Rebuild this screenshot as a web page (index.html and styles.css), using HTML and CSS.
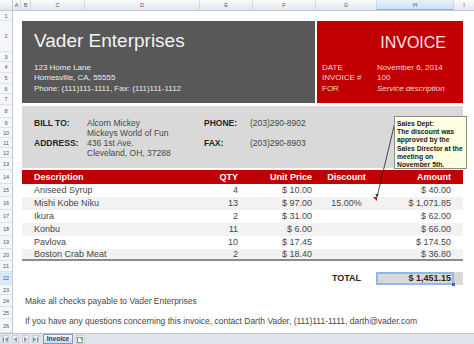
FILE: index.html
```html
<!DOCTYPE html>
<html lang="en">
<head>
    <meta charset="UTF-8">
    <meta name="viewport" content="width=device-width, initial-scale=1.0">
    <title>Invoice - Vader Enterprises</title>
    <link rel="stylesheet" href="styles.css">
</head>
<body>
<div class="app">
    <!-- column letters -->
    <div class="colhead">
        <div class="corner"></div>
        <div class="col col-a">A</div>
        <div class="col col-b">B</div>
        <div class="col col-c">C</div>
        <div class="col col-d">D</div>
        <div class="col col-e">E</div>
        <div class="col col-f">F</div>
        <div class="col col-g">G</div>
        <div class="col col-h active">H</div>
        <div class="col col-i">I</div>
    </div>

    <div class="workarea">
        <!-- row numbers -->
        <div class="rowhead">
            <div class="rn h10">1</div>
            <div class="rn h31">2</div>
            <div class="rn h10">3</div>
            <div class="rn h11">4</div>
            <div class="rn h11">5</div>
            <div class="rn h10">6</div>
            <div class="rn h11">7</div>
            <div class="rn h13">8</div>
            <div class="rn h10">9</div>
            <div class="rn h10">10</div>
            <div class="rn h10">11</div>
            <div class="rn h10">12</div>
            <div class="rn h12">13</div>
            <div class="rn h14">14</div>
            <div class="rn h13">15</div>
            <div class="rn h13">16</div>
            <div class="rn h13">17</div>
            <div class="rn h13">18</div>
            <div class="rn h13">19</div>
            <div class="rn h12">20</div>
            <div class="rn h11">21</div>
            <div class="rn h13 active">22</div>
            <div class="rn h10">23</div>
            <div class="rn h12">24</div>
            <div class="rn h12">25</div>
            <div class="rn h14">26</div>
        </div>

        <div class="sheet">
            <div class="banner">
                <div class="brand">
                    <h1>Vader Enterprises</h1>
                    <p>123 Home Lane</p>
                    <p>Homesville, CA, 55555</p>
                    <p>Phone: (111)111-1111, Fax: (111)111-1112</p>
                </div>
                <div class="invoice-head">
                    <h2>INVOICE</h2>
                    <div class="meta">
                        <span>DATE</span><span>November 6, 2014</span>
                        <span>INVOICE #</span><span>100</span>
                        <span>FOR</span><span class="italic">Service description</span>
                    </div>
                </div>
            </div>

            <div class="billing">
                <b>BILL TO:</b><span>Alcorn Mickey</span><b>PHONE:</b><span>(203)290-8902</span>
                <span></span><span>Mickeys World of Fun</span><span></span><span></span>
                <b>ADDRESS:</b><span>436 1st Ave.</span><b>FAX:</b><span>(203)290-8903</span>
                <span></span><span>Cleveland, OH, 37288</span><span></span><span></span>
            </div>

            <div class="items">
                <div class="row head">
                    <div class="c-desc">Description</div>
                    <div class="c-qty">QTY</div>
                    <div class="c-price">Unit Price</div>
                    <div class="c-disc">Discount</div>
                    <div class="c-amt">Amount</div>
                </div>
                <div class="row">
                    <div class="c-desc">Aniseed Syrup</div>
                    <div class="c-qty">4</div>
                    <div class="c-price">$ 10.00</div>
                    <div class="c-disc"></div>
                    <div class="c-amt">$ 40.00</div>
                </div>
                <div class="row alt">
                    <div class="c-desc">Mishi Kobe Niku</div>
                    <div class="c-qty">13</div>
                    <div class="c-price">$ 97.00</div>
                    <div class="c-disc">15.00%</div>
                    <div class="c-amt">$ 1,071.85</div>
                </div>
                <div class="row">
                    <div class="c-desc">Ikura</div>
                    <div class="c-qty">2</div>
                    <div class="c-price">$ 31.00</div>
                    <div class="c-disc"></div>
                    <div class="c-amt">$ 62.00</div>
                </div>
                <div class="row alt">
                    <div class="c-desc">Konbu</div>
                    <div class="c-qty">11</div>
                    <div class="c-price">$ 6.00</div>
                    <div class="c-disc"></div>
                    <div class="c-amt">$ 66.00</div>
                </div>
                <div class="row">
                    <div class="c-desc">Pavlova</div>
                    <div class="c-qty">10</div>
                    <div class="c-price">$ 17.45</div>
                    <div class="c-disc"></div>
                    <div class="c-amt">$ 174.50</div>
                </div>
                <div class="row alt last">
                    <div class="c-desc">Boston Crab Meat</div>
                    <div class="c-qty">2</div>
                    <div class="c-price">$ 18.40</div>
                    <div class="c-disc"></div>
                    <div class="c-amt">$ 36.80</div>
                </div>
            </div>

            <div class="row total">
                <div class="c-desc"></div>
                <div class="c-qty"></div>
                <div class="c-price"></div>
                <div class="c-disc">TOTAL</div>
                <div class="c-amt"><div class="selected">$ 1,451.15<span class="handle"></span></div></div>
            </div>

            <div class="notes">
                <p>Make all checks payable to Vader Enterprises</p>
                <p>If you have any questions concerning this invoice, contact Darth Vader, (111)111-1111, darth@vader.com</p>
            </div>
        </div>
    </div>

    <div class="tabbar">
        <span class="nav"><svg width="5" height="5" viewBox="0 0 5 5"><path d="M0 0h1v5H0zM5 0v5L1.5 2.5z" fill="#8a96a6"/></svg></span>
        <span class="nav"><svg width="5" height="5" viewBox="0 0 5 5"><path d="M4 0v5L0.5 2.5z" fill="#8a96a6"/></svg></span>
        <span class="nav"><svg width="5" height="5" viewBox="0 0 5 5"><path d="M1 0v5L4.5 2.5z" fill="#8a96a6"/></svg></span>
        <span class="nav"><svg width="5" height="5" viewBox="0 0 5 5"><path d="M0 0v5L3.5 2.5zM4 0h1v5H4z" fill="#8a96a6"/></svg></span>
        <span class="tab">Invoice</span>
        <span class="newsheet"><svg width="7" height="7" viewBox="0 0 7 7"><rect x="0.5" y="1.5" width="5" height="5" fill="#fff" stroke="#6b8e5a" stroke-width="0.8"/><path d="M3 0.5l1 1.5 1.6-0.4-0.6 1.5 1.3 1-1.7 0.2" fill="#5ea83c"/></svg></span>
    </div>

    <!-- comment note over the sheet -->
    <svg class="arrow" width="474" height="344" viewBox="0 0 474 344">
        <line x1="396" y1="118" x2="377.5" y2="195" stroke="#222" stroke-width="0.8"/>
        <path d="M377 197.5l-1.6-3.6 3.2 0.6z" fill="#222"/>
        <path d="M373 197h4v4z" fill="#e00000"/>
    </svg>
    <div class="comment">
        Sales Dept:<br>
        The discount was<br>
        approved by the<br>
        Sales Director at the<br>
        meeting on<br>
        November 5th.
    </div>
</div>
</body>
</html>
```

FILE: styles.css
```css
* {
    box-sizing: border-box;
}

body {
    margin: 0;
    font-family: "Liberation Sans", Arial, sans-serif;
    background: #fff;
    color: #474747;
}

.app {
    position: relative;
    width: 474px;
    height: 344px;
    overflow: hidden;
    display: flex;
    flex-direction: column;
}

/* column header */
.colhead {
    display: flex;
    height: 11px;
    background: linear-gradient(#fafbfc, #e3e7ec);
    border-bottom: 1px solid #c2c9d2;
    font-size: 5.5px;
    color: #4e5866;
}

.corner {
    width: 13px;
    border-right: 1px solid #c2c9d2;
}

.col {
    text-align: center;
    line-height: 10px;
    border-right: 1px solid #d2d8df;
}

.col-a { width: 8px; }
.col-b { width: 10px; }
.col-c { width: 54px; }
.col-d { width: 115px; }
.col-e { width: 53px; }
.col-f { width: 63px; }
.col-g { width: 61px; }
.col-h { width: 77px; }
.col-i { width: 20px; border-right: none; }

.col.active {
    background: linear-gradient(#eaf2fb, #cfe0f4);
    border-bottom: 1px solid #8fb1dc;
    color: #2c4a78;
}

/* rows */
.workarea {
    display: flex;
    height: 322px;
}

.rowhead {
    width: 13px;
    flex-shrink: 0;
    background: #f4f6f8;
    border-right: 1px solid #c2c9d2;
    font-size: 5.5px;
    color: #4e5866;
    text-align: center;
}

.rn {
    display: flex;
    align-items: center;
    justify-content: center;
    border-bottom: 1px solid #dde2e8;
}

.rn.active {
    background: #dde9f7;
    color: #2c5aa0;
}

.h10 { height: 10px; }
.h11 { height: 11px; }
.h12 { height: 12px; }
.h13 { height: 13px; }
.h14 { height: 14px; }
.h31 { height: 31px; }

.sheet {
    flex: 1;
    padding: 10px 0 0 8px;
}

/* banner */
.banner {
    display: grid;
    grid-template-columns: 293px 146px;
    gap: 2px;
    width: 441px;
    height: 82px;
    margin-left: 1px;
}

.brand {
    background: #585858;
    color: #ececec;
    padding: 9px 0 0 12px;
}

.brand h1 {
    margin: 0 0 10.5px;
    font-size: 19px;
    line-height: 22px;
    font-weight: normal;
    color: #f4f4f4;
}

.brand p {
    margin: 0;
    font-size: 8px;
    line-height: 10.5px;
}

.invoice-head {
    background: #c00000;
    color: #f8d6d6;
    padding: 11.5px 17px 0 5px;
}

.invoice-head h2 {
    margin: 0 0 10px;
    text-align: right;
    font-size: 16px;
    line-height: 20px;
    font-weight: normal;
    color: #fbe6e6;
}

.meta {
    display: grid;
    grid-template-columns: 55px 1fr;
    font-size: 8px;
    line-height: 10.5px;
}

.italic {
    font-style: italic;
}

/* bill to */
.billing {
    display: grid;
    grid-template-columns: 53px 117px 46px 1fr;
    grid-auto-rows: 10px;
    width: 441px;
    height: 62px;
    margin: 3px 0 0 1px;
    padding: 12px 0 0 12px;
    background: #d9d9d9;
    font-size: 8.5px;
    line-height: 10px;
}

.billing b {
    color: #262626;
}

/* items */
.items {
    width: 441px;
    margin: 2px 0 0 1px;
}

.row {
    display: grid;
    grid-template-columns: 178px 53px 63px 61px 86px;
    height: 13px;
    font-size: 9px;
    line-height: 13px;
    white-space: nowrap;
}

.row.head {
    height: 14px;
    line-height: 14px;
    background: #c00000;
    color: #fff;
    font-weight: bold;
}

.row.alt {
    background: #f2f2f2;
}

.row.last {
    height: 12px;
    line-height: 10px;
    border-bottom: 2px solid #8c8c8c;
}

.c-desc { padding-left: 12px; }
.c-qty { text-align: right; padding-right: 15px; }
.c-price { text-align: right; padding-right: 4px; }
.c-disc { text-align: center; }
.c-amt { text-align: right; padding-right: 12px; }

.total {
    width: 441px;
    margin: 11px 0 0 1px;
}

.total .c-disc {
    font-weight: bold;
    color: #262626;
}

.total .c-amt {
    padding: 0;
    background: #d9d9d9;
}

.selected {
    position: relative;
    width: 78px;
    height: 13px;
    margin-left: -1px;
    padding-right: 1px;
    border: 2px solid #93b7e4;
    line-height: 9px;
    font-weight: bold;
    color: #262626;
}

.handle {
    position: absolute;
    right: -3px;
    bottom: -3px;
    width: 3px;
    height: 3px;
    background: #3a6cb4;
}

/* notes */
.notes {
    margin-top: 11px;
    padding-left: 4px;
    font-size: 8.5px;
    line-height: 10px;
}

.notes p {
    margin: 0 0 10px;
    white-space: nowrap;
}

/* sheet tabs */
.tabbar {
    display: flex;
    align-items: center;
    gap: 3px;
    height: 11px;
    padding-left: 2px;
    background: #dfe4ea;
    border-top: 1px solid #bcc5d0;
}

.nav {
    display: flex;
    align-items: center;
    justify-content: center;
    width: 7px;
    height: 8px;
    background: #eef1f5;
    border: 1px solid #c7cfd9;
}

.tab {
    width: 30px;
    height: 10px;
    margin-left: 1px;
    background: linear-gradient(#f3f8fd, #c5daf1);
    border: 1px solid #7f9cc0;
    font-size: 6.5px;
    font-weight: bold;
    line-height: 8px;
    text-align: center;
    color: #1d3a63;
}

.newsheet {
    display: flex;
    align-items: center;
    justify-content: center;
    width: 9px;
    height: 9px;
    background: #eef1f5;
    border: 1px solid #c7cfd9;
}

/* comment */
.arrow {
    position: absolute;
    left: 0;
    top: 0;
    pointer-events: none;
}

.comment {
    position: absolute;
    left: 394px;
    top: 116px;
    width: 73px;
    height: 53px;
    padding: 3px 0 0 2px;
    background: #ffffe1;
    border: 1px solid #8c8c8c;
    font-size: 6.8px;
    line-height: 8.2px;
    font-weight: bold;
    color: #1a1a1a;
    white-space: nowrap;
}
```
